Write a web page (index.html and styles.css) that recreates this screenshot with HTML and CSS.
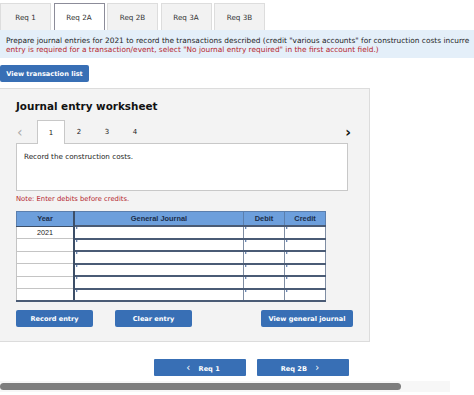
FILE: index.html
```html
<!DOCTYPE html>
<html lang="en">
<head>
  <meta charset="UTF-8">
  <title>Journal entry worksheet</title>
  <link rel="stylesheet" href="styles.css">
</head>
<body>
  <div class="tabs">
    <div class="tab">Req 1</div>
    <div class="tab active">Req 2A</div>
    <div class="tab">Req 2B</div>
    <div class="tab">Req 3A</div>
    <div class="tab">Req 3B</div>
  </div>

  <div class="instructions">
    <p>Prepare journal entries for 2021 to record the transactions described (credit "various accounts" for construction costs incurre</p>
    <p class="warn">entry is required for a transaction/event, select "No journal entry required" in the first account field.)</p>
  </div>

  <button class="btn btn-list">View transaction list</button>

  <div class="worksheet">
    <h2>Journal entry worksheet</h2>
    <div class="pager">
      <span class="arrow prev">&lsaquo;</span>
      <span class="page current">1</span>
      <span class="page">2</span>
      <span class="page">3</span>
      <span class="page">4</span>
      <span class="arrow next">&rsaquo;</span>
    </div>
    <div class="desc">Record the construction costs.</div>
    <p class="note">Note: Enter debits before credits.</p>

    <table class="journal">
      <thead>
        <tr>
          <th class="c-year">Year</th>
          <th class="c-acct">General Journal</th>
          <th class="c-dr">Debit</th>
          <th class="c-cr">Credit</th>
        </tr>
      </thead>
      <tbody>
        <tr><td class="year">2021</td><td class="cell"></td><td class="cell"></td><td class="cell"></td></tr>
        <tr><td class="year"></td><td class="cell"></td><td class="cell"></td><td class="cell"></td></tr>
        <tr><td class="year"></td><td class="cell"></td><td class="cell"></td><td class="cell"></td></tr>
        <tr><td class="year"></td><td class="cell"></td><td class="cell"></td><td class="cell"></td></tr>
        <tr><td class="year"></td><td class="cell"></td><td class="cell"></td><td class="cell"></td></tr>
        <tr><td class="year"></td><td class="cell"></td><td class="cell"></td><td class="cell"></td></tr>
      </tbody>
    </table>

    <div class="actions">
      <button class="btn btn-record">Record entry</button>
      <button class="btn btn-clear">Clear entry</button>
      <button class="btn btn-view">View general journal</button>
    </div>
  </div>

  <div class="nav">
    <button class="btn btn-nav"><span class="chev">&lsaquo;</span> Req 1</button>
    <button class="btn btn-nav">Req 2B <span class="chev">&rsaquo;</span></button>
  </div>

  <div class="scroll">
    <div class="thumb"></div>
  </div>
</body>
</html>
```

FILE: styles.css
```css
body {
  margin: 0;
  width: 474px;
  height: 395px;
  overflow: hidden;
  background: #fff;
  font-family: "DejaVu Sans", Verdana, sans-serif;
  color: #222;
}

/* top requirement tabs */
.tabs {
  display: flex;
  gap: 2.5px;
  padding-top: 3px;
  height: 27px;
}

.tab {
  width: 51px;
  height: 27px;
  box-sizing: border-box;
  border: 1px solid #ddd;
  border-bottom: none;
  background: #f2f2f2;
  font-size: 7.2px;
  color: #333;
  display: flex;
  align-items: center;
  justify-content: center;
  padding-top: 1px;
}

.tab.active {
  background: #fff;
  border-color: #8c8c99;
  border-width: 1px 1px 0 1px;
}

.instructions {
  background: #e4eff9;
  height: 28px;
  box-sizing: border-box;
  padding: 6px 0 0 6px;
  white-space: nowrap;
  overflow: hidden;
}

.instructions p {
  margin: 0;
  font-size: 7.4px;
  line-height: 9px;
  color: #1e1e1e;
}

.instructions .warn {
  color: #b5262e;
}

.btn {
  border: none;
  border-radius: 2px;
  background: #386fb5;
  color: #fff;
  font-family: "DejaVu Sans", Verdana, sans-serif;
  font-weight: bold;
  font-size: 6.6px;
  height: 17px;
  padding: 0;
  cursor: pointer;
}

.btn-list {
  display: block;
  margin-top: 7px;
  width: 89px;
}

/* worksheet panel */
.worksheet {
  margin-top: 6px;
  width: 370px;
  height: 254px;
  box-sizing: border-box;
  background: #f3f3f3;
  border: 1px solid #dcdcdc;
  border-left: none;
  padding: 10px 0 0 16px;
}

.worksheet h2 {
  margin: 0;
  font-size: 10.4px;
  line-height: 14px;
  color: #111;
}

.pager {
  display: flex;
  align-items: flex-end;
  height: 23px;
  margin-top: 7px;
  width: 332px;
  position: relative;
  z-index: 1;
}

.arrow {
  font-size: 14px;
  line-height: 18px;
  height: 20px;
}

.prev {
  color: #aaa;
  width: 20px;
  padding-left: 1px;
}

.next {
  margin-left: auto;
  color: #111;
  font-weight: bold;
  margin-right: -3px;
}

.page {
  width: 28px;
  height: 23px;
  box-sizing: border-box;
  display: flex;
  align-items: center;
  justify-content: center;
  font-size: 7px;
  color: #222;
}

.page.current {
  background: #fff;
  border: 1px solid #c8c8c8;
  border-bottom: none;
  height: 24px;
  margin-bottom: -1px;
}

.desc {
  width: 332px;
  height: 48px;
  box-sizing: border-box;
  background: #fff;
  border: 1px solid #c8c8c8;
  padding: 8px 0 0 7px;
  font-size: 7.2px;
  line-height: 9px;
  color: #222;
}

.note {
  margin: 4px 0 0 0;
  font-size: 6.8px;
  line-height: 9px;
  color: #b5262e;
}

/* journal table */
.journal {
  margin-top: 7px;
  border-collapse: collapse;
  table-layout: fixed;
  width: 308px;
  font-family: "Liberation Sans", Arial, sans-serif;
}

.journal th {
  background: #6d9fdc;
  color: #1c2e4a;
  font-size: 7.4px;
  font-weight: bold;
  height: 13px;
  padding: 0;
  border: 1px solid #5b7fae;
  border-bottom: 1px solid #3d4f68;
}

.journal th.c-year { width: 56px; border-right: 2px solid #3d4f68; }
.journal th.c-acct { width: 168px; }
.journal th.c-dr { width: 40px; }
.journal th.c-cr { width: 40px; }

.journal td {
  height: 12.5px;
  box-sizing: border-box;
  padding: 0;
  background: #fff;
}

.journal td.year {
  text-align: center;
  font-size: 7.2px;
  color: #222;
  border: 1px solid #c4c4c4;
  border-right: 2px solid #3d4f68;
}

.journal td.cell {
  border: 1px solid #7f8da3;
  border-top: 2px solid #4a5b75;
  position: relative;
}

.journal td.cell::before {
  content: "";
  position: absolute;
  top: 0;
  left: 1px;
  border-left: 2px solid #3b5e96;
  border-top: 1.5px solid transparent;
  border-bottom: 1.5px solid transparent;
}

.journal tbody tr:last-child td {
  border-bottom: 2px solid #4a5b75;
}

.actions {
  display: flex;
  margin-top: 8px;
  width: 337px;
}

.btn-record { width: 77px; }
.btn-clear { width: 77px; margin-left: 22px; }
.btn-view { width: 92px; margin-left: auto; }

/* bottom navigation */
.nav {
  display: flex;
  gap: 11px;
  margin: 17px 0 0 154px;
}

.btn-nav {
  width: 92px;
  border-radius: 1px;
}

.chev {
  font-size: 10px;
  font-weight: normal;
  margin: 0 6px;
}

.scroll {
  margin-top: 5px;
  width: 450px;
  height: 11px;
  background: #f7f7f7;
  display: flex;
  align-items: center;
}

.thumb {
  width: 401px;
  height: 7px;
  border-radius: 4px;
  background: #7e7e7e;
}
```
